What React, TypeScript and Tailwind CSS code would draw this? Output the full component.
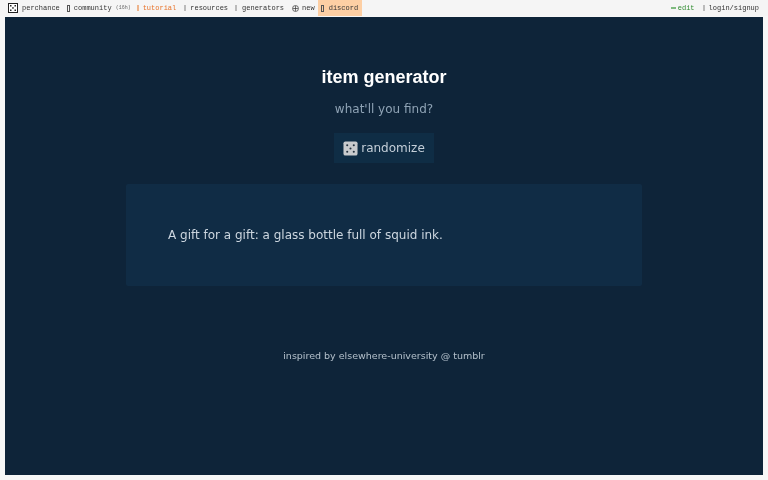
import React from 'react';

const Tofu: React.FC<{ className?: string }> = ({ className = 'border-[#777] h-[6px] w-[3px]' }) => (
  <span className={`inline-block shrink-0 border-[0.5px] ${className}`}></span>
);

const Die: React.FC<{ size: number; className?: string; dot: string }> = ({ size, className, dot }) => (
  <svg width={size} height={size} viewBox="0 0 16 16" className={className}>
    <rect x="0.5" y="0.5" width="15" height="15" rx="2" fill="#c9cbcd" />
    <circle cx="4.5" cy="4.5" r="1.1" fill={dot} />
    <circle cx="11.5" cy="4.5" r="1.1" fill={dot} />
    <circle cx="8" cy="8" r="1.1" fill={dot} />
    <circle cx="4.5" cy="11.5" r="1.1" fill={dot} />
    <circle cx="11.5" cy="11.5" r="1.1" fill={dot} />
  </svg>
);

const NavBar: React.FC = () => (
  <nav className="flex h-4 items-center justify-between bg-[#f5f5f5] pl-[8px] pr-[9px] font-['Liberation_Mono',monospace] text-[7px] text-[#333] [will-change:transform]">
    <div className="flex h-full items-center">
      <span className="flex items-center gap-[4px]">
        <svg width="10" height="10" viewBox="0 0 10 10">
          <rect x="0.5" y="0.5" width="9" height="9" fill="#fff" stroke="#222" />
          <rect x="2" y="2" width="1.5" height="1.5" fill="#222" />
          <rect x="6.5" y="2" width="1.5" height="1.5" fill="#222" />
          <rect x="4.2" y="4.2" width="1.5" height="1.5" fill="#222" />
          <rect x="2" y="6.5" width="1.5" height="1.5" fill="#222" />
          <rect x="6.5" y="6.5" width="1.5" height="1.5" fill="#222" />
        </svg>
        perchance
      </span>
      <span className="ml-[7px] flex items-center gap-[4px]">
        <Tofu className="border-[#555] h-[7px] w-[3px]" />
        <span>community</span>
        <span className="mt-[2px] text-[5px] text-[#666]">(16h)</span>
      </span>
      <span className="ml-[6px] flex items-center gap-[4px] text-[#e8742c]">
        <Tofu className="border-[#edb48c] h-[6px] w-[2px]" />
        tutorial
      </span>
      <span className="ml-[8px] flex items-center gap-[4px]">
        <Tofu className="border-[#bbb] h-[6px] w-[2px]" />
        resources
      </span>
      <span className="ml-[7px] flex items-center gap-[5px]">
        <Tofu className="border-[#bbb] h-[6px] w-[2px]" />
        generators
      </span>
      <span className="ml-[8px] flex items-center gap-[3px]">
        <svg width="7" height="7" viewBox="0 0 8 8" fill="none" stroke="#333" strokeWidth="0.8">
          <circle cx="4" cy="4" r="3.4" />
          <path d="M4 1.2V6.8M1.2 4H6.8" />
        </svg>
        new
      </span>
      <span className="ml-[3px] flex h-full items-center gap-[5px] bg-[#fdcfa4] pl-[3px] pr-[4px]">
        <Tofu className="border-[#555] h-[7px] w-[3px]" />
        discord
      </span>
    </div>
    <div className="flex items-center">
      <span className="flex items-center gap-[2px] text-[#2e8b2e]">
        <span className="inline-block h-[1.5px] w-[5px] bg-[#7fbb7f]"></span>
        edit
      </span>
      <span className="ml-[8px] flex items-center gap-[4px]">
        <Tofu className="border-[#bbb] h-[6px] w-[2px]" />
        login/signup
      </span>
    </div>
  </nav>
);

export default function App() {
  return (
    <div className="h-[480px] w-[768px] overflow-hidden bg-[#f7f7f7]">
      <NavBar />
      <main className="mx-[5px] mt-px flex h-[458px] flex-col items-center bg-[#0e2439] pt-[50px] font-['DejaVu_Sans',sans-serif] [will-change:transform]">
        <h1 className="font-['Liberation_Sans',sans-serif] text-[18px] font-bold leading-[21px] text-white">item generator</h1>
        <p className="mt-[13px] text-[12px] leading-[16px] text-[#8fa3b5]">what'll you find?</p>
        <button className="mt-[16px] flex h-[30px] w-[100px] items-center justify-center gap-[3px] bg-[#0f2d45] text-[12px] text-[#c3ced8]">
          <Die size={15} dot="#24323e" />
          randomize
        </button>
        <section className="mt-[21px] flex h-[102px] w-[516px] items-center rounded-[2px] bg-[#102c45] pl-[42px] text-[12px] text-[#ccd6df]">
          A gift for a gift: a glass bottle full of squid ink.
        </section>
        <p className="mt-[63px] text-[9.5px] leading-[14px] text-[#b4c0cb]">inspired by elsewhere-university @ tumblr</p>
      </main>
    </div>
  );
}
